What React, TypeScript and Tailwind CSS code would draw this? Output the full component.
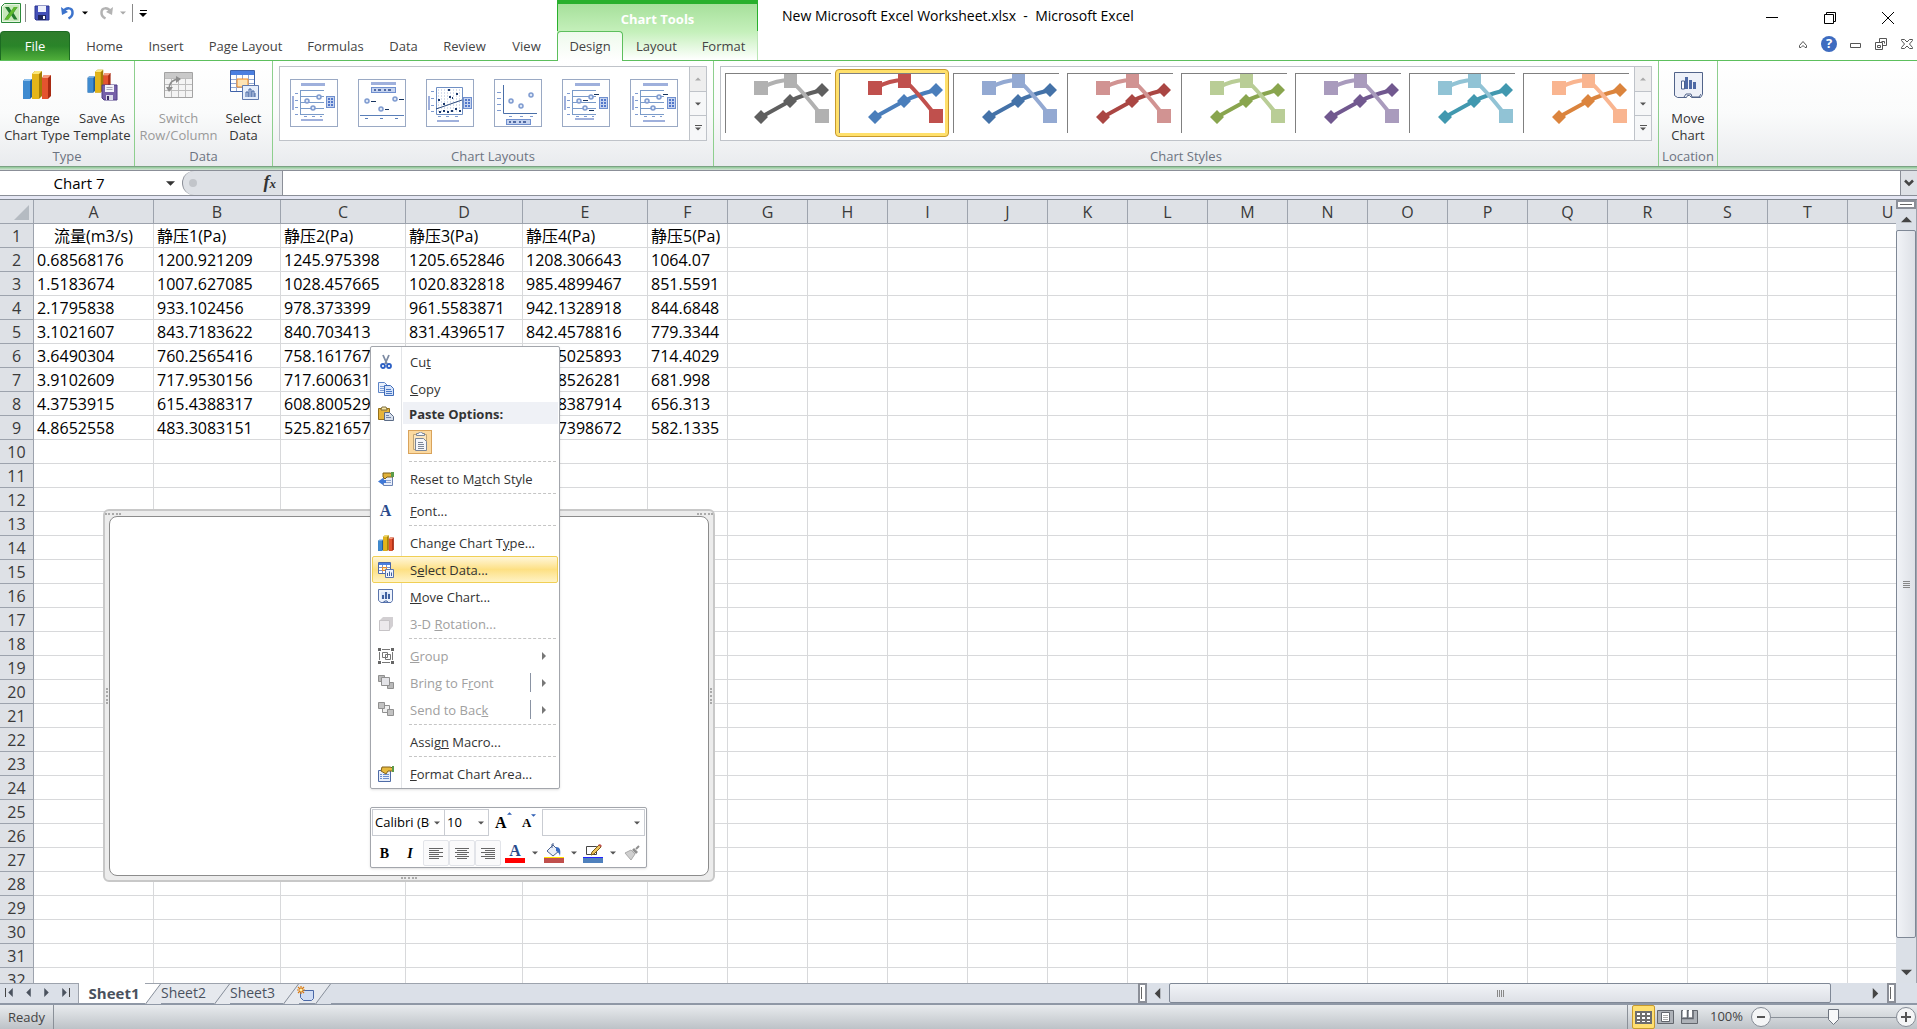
import type { ReactNode } from "react";

const columns = "ABCDEFGHIJKLMNOPQRSTU".split("");

const columnWidths: Record<string, string> = {
  A: "w-[120px]",
  B: "w-[127px]",
  C: "w-[125px]",
  D: "w-[117px]",
  E: "w-[125px]",
};

const data = [
  ["流量(m3/s)", "静压1(Pa)", "静压2(Pa)", "静压3(Pa)", "静压4(Pa)", "静压5(Pa)"],
  ["0.68568176", "1200.921209", "1245.975398", "1205.652846", "1208.306643", "1064.07"],
  ["1.5183674", "1007.627085", "1028.457665", "1020.832818", "985.4899467", "851.5591"],
  ["2.1795838", "933.102456", "978.373399", "961.5583871", "942.1328918", "844.6848"],
  ["3.1021607", "843.7183622", "840.703413", "831.4396517", "842.4578816", "779.3344"],
  ["3.6490304", "760.2565416", "758.161767", "", "755.5025893", "714.4029"],
  ["3.9102609", "717.9530156", "717.600631", "", "716.8526281", "681.998"],
  ["4.3753915", "615.4388317", "608.800529", "", "618.8387914", "656.313"],
  ["4.8652558", "483.3083151", "525.821657", "", "527.7398672", "582.1335"],
];

const tabs = [
  ["Home", "w-[63px]"],
  ["Insert", "w-[60px]"],
  ["Page Layout", "w-[99px]"],
  ["Formulas", "w-[81px]"],
  ["Data", "w-[55px]"],
  ["Review", "w-[67px]"],
  ["View", "w-[57px]"],
];

const chartStyles = [
  ["#5f5f5f", "#b1b1b1"],
  ["#4a7ebb", "#c0504d"],
  ["#4472a8", "#93a9d2"],
  ["#aa4643", "#d19392"],
  ["#89a54e", "#b9cd96"],
  ["#71588f", "#a99bbd"],
  ["#4198af", "#91c3d5"],
  ["#db843d", "#f9b590"],
];

/* ---------- icons ---------- */

function Arrow({ dir = "down", className = "" }: { dir?: "down" | "up" | "left" | "right"; className?: string }) {
  const d = {
    down: "M0 2h8L4 6z",
    up: "M0 6h8L4 2z",
    left: "M6 0v8L2 4z",
    right: "M2 0v8l4-4z",
  }[dir];
  return (
    <svg viewBox="0 0 8 8" className={`shrink-0 ${className}`} fill="currentColor" aria-hidden>
      <path d={d} />
    </svg>
  );
}

function Bars() {
  return (
    <>
      <path d="M2 12l2-2h7v18l-2 2H2z" fill="#1f5c99" />
      <path d="M2 12h7v18H2z" fill="#3f8bd0" />
      <path d="M2 12l2-2h7l-2 2z" fill="#8cc0ee" />
      <path d="M21 9l2-3h7v21l-3 3h-6z" fill="#a82a12" />
      <path d="M21 9h6v21h-6z" fill="#e4532f" />
      <path d="M21 9l2-3h7l-3 3z" fill="#f59a7c" />
      <path d="M11 5l3-3h7v25l-3 3h-7z" fill="#a37c05" />
      <path d="M11 5h7v25h-7z" fill="#e3b51a" />
      <path d="M11 5l3-3h7l-3 3z" fill="#fbe77a" />
    </>
  );
}

function ChartTypeIcon({ className = "size-8" }: { className?: string }) {
  return (
    <svg viewBox="0 0 32 32" className={className} aria-hidden>
      <Bars />
    </svg>
  );
}

function SaveTemplateIcon() {
  return (
    <svg viewBox="0 0 32 32" className="size-8" aria-hidden>
      <g transform="translate(0 -1) scale(.82)">
        <Bars />
      </g>
      <path d="M16 16h15v15H18l-2-2z" fill="#7560a8" stroke="#4f3c86" />
      <path d="M19 16h9v7h-9z" fill="#f3f3fa" />
      <path d="M20.500 18.500h6M20.500 20.500h6" stroke="#a9a9bb" />
      <path d="M20 26h7v5h-7z" fill="#dcdcea" />
      <path d="M21 27h2v4h-2z" fill="#3a2c66" />
    </svg>
  );
}

function SwitchIcon() {
  return (
    <svg viewBox="0 0 32 32" className="size-8" fill="none" aria-hidden>
      <path d="M1.500 3.500h28v25h-28z" fill="#f4f4f4" stroke="#a3a3a3" />
      <path d="M2 4h27v5H2z" fill="#c9c9c9" />
      <path d="M2 9.500h27M2 15.500h27M2 21.500h27M8.500 9v19M15.500 9v19M22.500 9v19" stroke="#bdbdbd" />
      <path d="M6 21c0-7 4-11 11-11" stroke="#8d8d8d" strokeWidth="1.500" />
      <path d="M13 7l5 3-5 4zM3 18l3 5 4-5z" fill="#8d8d8d" />
    </svg>
  );
}

function SelectDataIcon({ className = "size-8" }: { className?: string }) {
  return (
    <svg viewBox="0 0 32 32" className={className} fill="none" aria-hidden>
      <path d="M2.500 1.500h24v21h-24z" fill="#fff" stroke="#3f62a8" />
      <path d="M3 2h23v4H3z" fill="#4b7fe0" />
      <path d="M3 10.500h23M3 14.500h23M3 18.500h23M8.500 6v16M14.500 6v16M20.500 6v16" stroke="#93a8d2" />
      <path d="M9 10h11v8H9z" fill="#fde3b4" stroke="#f08a24" />
      <path d="M14.500 16.500h16v14h-16z" fill="#e6eefb" stroke="#5f79ad" />
      <path d="M18 28v-5h2v5M21 28v-8h2v8M24 28v-6h2v6M27 28v-4" stroke="#3f60a0" />
    </svg>
  );
}

function MoveChartIcon({ className = "size-8" }: { className?: string }) {
  return (
    <svg viewBox="0 0 32 32" className={className} fill="none" aria-hidden>
      <path d="M2.500 3.500h28v22l-2 3h-9l-2-2h-2l-1 2h-9l-3-2z" fill="#eef1f8" stroke="#52648a" />
      <path d="M12 28l2-3h5l1 3h7l2-3" stroke="#52648a" />
      <path d="M9.500 20v-8h3v8z" fill="#fff" stroke="#4b628f" />
      <path d="M13 8h3v12h-3zM17 11h3v9h-3zM21 13h3v7h-3z" fill="#4f6aa5" />
    </svg>
  );
}

const mark = "#7f9bd0";

function Legend({ x, y, wide }: { x: number; y: number; wide?: boolean }) {
  return wide ? (
    <g>
      <rect x={x + 0.5} y={y + 0.5} width="24" height="5" fill="#c5d3ef" stroke="#6f8fcf" />
      <path d={`M${x + 3} ${y + 3}h2m2 0h3m3 0h2m2 0h3`} stroke="#2c4a8c" strokeWidth="1.500" />
    </g>
  ) : (
    <g>
      <rect x={x + 0.5} y={y + 0.5} width="8" height="11" fill="#c5d3ef" stroke="#6f8fcf" />
      <path d={`M${x + 2} ${y + 3}h2m1 0h2M${x + 2} ${y + 6}h2m1 0h2M${x + 2} ${y + 9}h2m1 0h2`} stroke="#2c5ac0" strokeWidth="1.500" />
    </g>
  );
}

function Dots({ at }: { at: number[][] }) {
  return (
    <>
      {at.map(([x, y]) => (
        <circle key={x} cx={x} cy={y} r="2" fill="#dde6f6" stroke={mark} strokeWidth="1.500" />
      ))}
    </>
  );
}

function Lines() {
  return (
    <>
      <path d="M10.500 11v25M10 11.500h24M10 17.500h24M10 23.500h24M10 29.500h24M10 35.500h24" stroke="#7a9bc9" />
      <path d="M5 14.500h3M5 21.500h3M5 28.500h3M5 35.500h3M14 37.500h3M22 37.500h3M30 37.500h2" stroke={mark} />
      <path d="M2 17h2v14H2z" fill="#9fb0dc" />
    </>
  );
}

const layoutArt: ReactNode[] = [
  <>
    <path d="M11 4h24v3H11zM11 40h22v2H11z" fill="#9fb0dc" />
    <Lines />
    <Dots at={[[17, 22], [29, 18], [23, 29]]} />
    <Legend x={36} y={17} />
  </>,
  <>
    <path d="M13 3h25v3H13z" fill="#9fb0dc" />
    <Legend x={13} y={8} wide />
    <Dots at={[[9, 22], [37, 20], [23, 30]]} />
    <path d="M13 22.500h5M41 20.500h5M27 30.500h4" stroke="#16345f" />
    <path d="M2 36.500h44M7 39.500h3M22 39.500h3M37 39.500h3" stroke="#5b7fb8" />
  </>,
  <>
    <path d="M10.500 8.500h26v27h-26z" stroke="#6f8fc4" />
    <path d="M12 11h24M12 14h24M12 17h24M12 20h24M12 23h24M12 26h24M12 29h24M12 32h24" stroke="#a9b8d8" strokeDasharray="1 2" />
    <path d="M10 30l26-9" stroke="#2c4a7c" />
    <path d="M22 10h2v2h-2zM30 14h2v2h-2zM12 20h2v2h-2zM23 17h2v2h-2zM17 24h2v2h-2zM13 32h2v2h-2zM17 31h2v2h-2zM21 32h2v2h-2zM25 31h2v2h-2zM29 29h2v2h-2zM33 31h2v2h-2zM26 18h1v2h-1z" fill="#1d3a6e" />
    <path d="M5 12.500h3M5 19.500h3M5 26.500h3M5 32.500h3M12 37.500h3M20 37.500h3M29 37.500h3" stroke={mark} />
    <path d="M2 17h2v14H2zM11 41h22v2H11z" fill="#9fb0dc" />
    <Legend x={37} y={18} />
  </>,
  <>
    <path d="M9.500 6v28.500H43" stroke="#4a6fa8" />
    <path d="M3 13.500h4M3 19.500h4M3 25.500h4M3 31.500h4M15 37.500h3M26 37.500h3M36 37.500h3" stroke={mark} />
    <Dots at={[[17, 22], [27, 27], [37, 16]]} />
    <Legend x={12} y={40} wide />
  </>,
  <>
    <path d="M13 4h25v3H13zM13 39h19v2H13z" fill="#9fb0dc" />
    <Lines />
    <Dots at={[[17, 22], [29, 18], [23, 29]]} />
    <path d="M21 21.500h5M32 15.500h5M27 31.500h5" stroke="#16345f" />
    <Legend x={37} y={18} />
  </>,
  <>
    <path d="M13 4h25v3H13zM13 41h22v2H13z" fill="#9fb0dc" />
    <Lines />
    <Dots at={[[17, 22], [29, 18], [23, 29]]} />
    <path d="M33 15.500h5" stroke="#16345f" />
    <Legend x={37} y={18} />
  </>,
];

function StyleArt({ line, square }: { line: string; square: string }) {
  return (
    <svg viewBox="0 0 105 59" className="h-[59px] w-[105px]" fill="none" aria-hidden>
      <path d="M35 43L64 27Q76 21 96 16" stroke={line} strokeWidth="4" />
      <path d="M35 36l7 7-7 7-7-7zM64 20l7 7-7 7-7-7zM96 9l7 7-7 7-7-7z" fill={line} />
      <path d="M35 14Q50 6 64 6Q74 14 96 42" stroke={square} strokeWidth="4" />
      <path d="M28 7h14v14H28zM58 0h13v14H58zM89 35h14v14H89z" fill={square} />
    </svg>
  );
}

/* ---------- ribbon ---------- */

function RibbonGroup({ label, className = "", children }: { label: string; className?: string; children: ReactNode }) {
  return (
    <section
      className={`flex shrink-0 flex-col border-r border-[#8ecf8e] bg-linear-to-b from-white via-[#fafbfb] to-[#e9ebee] ${className}`}
      aria-label={label}
    >
      <div className="flex h-[86px] items-start justify-center">{children}</div>
      <div className="text-center leading-[19px] text-[#6c7380]">{label}</div>
    </section>
  );
}

function BigButton({ icon, lines, disabled, className = "" }: { icon: ReactNode; lines: string[]; disabled?: boolean; className?: string }) {
  return (
    <button disabled={disabled} className={`flex flex-col items-center pt-2 whitespace-nowrap ${disabled ? "text-[#9a9a9a]" : "text-[#333]"} ${className}`}>
      {icon}
      <span className="mt-[9px] leading-[17px]">
        {lines[0]}
        <br />
        {lines[1]}
      </span>
    </button>
  );
}

function GalleryScroll() {
  return (
    <div className="-my-px -mr-px flex w-[18px] flex-col border border-[#bfc3c9] text-[#555]">
      <button aria-label="Previous row" className="flex flex-1 items-center justify-center bg-[#eee] text-[#aaa]">
        <Arrow dir="up" className="size-[6px]" />
      </button>
      <button aria-label="Next row" className="flex flex-1 items-center justify-center border-y border-[#bfc3c9] bg-[#f6f7f8]">
        <Arrow className="size-[6px]" />
      </button>
      <button aria-label="More" className="flex flex-1 flex-col items-center justify-center bg-[#f6f7f8]">
        <span className="h-px w-[7px] bg-[#555]" />
        <Arrow className="size-[6px]" />
      </button>
    </div>
  );
}

function TitleArea() {
  return (
    <header className="flex h-[60px] bg-white">
      <div className="flex w-[557px] shrink-0 flex-col">
        <div className="flex h-[31px] items-center pb-[5px] pl-px">
          <button aria-label="Excel">
            <svg viewBox="0 0 20 20" className="size-5" aria-hidden>
              <path d="M.500 3.500l3-3h16v19h-19z" fill="#e8f5e2" stroke="#2c8a3a" />
              <path d="M2 4l3-2h13v16H2z" fill="#c7e8bb" />
              <path d="M4 4h4l2.500 4L13 4h3.500l-4 6 4 6.500H13L10 12l-3 4.500H3.500L8 10z" fill="#237a2f" />
              <path d="M13 4h3.500l-9 12.500h-4z" fill="#5fb92e" />
            </svg>
          </button>
          <span className="mx-1 h-[18px] w-px bg-[#888]" />
          <button aria-label="Save" className="ml-1">
            <svg viewBox="0 0 16 16" className="size-4" aria-hidden>
              <path d="M1 1h14v14H2l-1-1z" fill="#4450b8" stroke="#2b3490" />
              <path d="M4 1h8v6H4z" fill="#eef1fb" />
              <path d="M4 10h8v5H4z" fill="#20265e" />
              <path d="M9 11h2v3H9z" fill="#fff" />
            </svg>
          </button>
          <button aria-label="Undo" className="ml-2.5">
            <svg viewBox="0 0 16 16" className="size-4" fill="none" aria-hidden>
              <path d="M3 7c3-5 10-5 9.500 1 0 3-2 4.500-4 5.500" stroke="#3c73cc" strokeWidth="2.500" />
              <path d="M1 2l1 8 6-3z" fill="#3c73cc" />
            </svg>
          </button>
          <button aria-label="Undo list" className="ml-1.5">
            <Arrow className="size-[6px] text-black" />
          </button>
          <button aria-label="Redo" className="ml-2.5" disabled>
            <svg viewBox="0 0 16 16" className="size-4" fill="none" aria-hidden>
              <path d="M13 7c-3-5-10-5-9.500 1 0 3 2 4.500 4 5.500" stroke="#b3b3b3" strokeWidth="2.500" />
              <path d="M15 2l-1 8-6-3z" fill="#b3b3b3" />
            </svg>
          </button>
          <button aria-label="Redo list" className="ml-1.5" disabled>
            <Arrow className="size-[6px] text-[#aaa]" />
          </button>
          <span className="ml-1.5 h-[18px] w-px bg-[#888]" />
          <button aria-label="Customize" className="ml-1.5 flex flex-col items-center pt-0.5">
            <span className="h-px w-[7px] bg-black" />
            <Arrow className="size-2 text-black" />
          </button>
        </div>
        <nav className="flex h-[29px] text-[#444]">
          <button className="mr-[3px] w-[70px] rounded-t-sm border border-b-0 border-[#1c6b22] bg-linear-to-b from-[#2f7d2c] via-[#2a8429] to-[#4fae3a] pt-px text-white">File</button>
          {tabs.map(([label, width]) => (
            <button key={label} className={`${width} shrink-0 pt-0.5 whitespace-nowrap`}>
              {label}
            </button>
          ))}
        </nav>
      </div>
      <div className="flex w-[201px] shrink-0 flex-col border-t-4 border-[#28b02c] bg-linear-to-b from-[#a6e09b] via-[#c5f0bb] to-white">
        <div className="flex h-[27px] items-center justify-center border-x border-[#28b02c] pt-1 font-bold text-white">Chart Tools</div>
        <nav className="flex h-[29px] border-r border-[#b9e6b4] text-[#444]">
          <button className="relative -mb-px h-[30px] w-[66px] rounded-t-sm border border-b-0 border-[#5dbf5d] bg-linear-to-b from-[#eefaec] to-white">Design</button>
          <button className="w-[67px] pt-0.5">Layout</button>
          <button className="w-[67px] pt-0.5">Format</button>
        </nav>
      </div>
      <div className="flex flex-1 justify-between">
        <h1 className="pt-1 pl-6 text-[14px] leading-6 whitespace-pre text-black">New Microsoft Excel Worksheet.xlsx  -  Microsoft Excel</h1>
        <div className="flex flex-col text-black">
          <div className="flex h-[36px] items-center">
            <button aria-label="Minimize" className="flex w-[58px] justify-center">
              <svg viewBox="0 0 12 12" className="size-3" stroke="currentColor" aria-hidden>
                <path d="M0 5.500h12" />
              </svg>
            </button>
            <button aria-label="Restore" className="flex w-[58px] justify-center">
              <svg viewBox="0 0 12 12" className="size-3" fill="none" stroke="currentColor" aria-hidden>
                <path d="M.500 2.500h9v9h-9zM2.500 2.500v-2h9v9h-2" />
              </svg>
            </button>
            <button aria-label="Close" className="flex w-[58px] justify-center">
              <svg viewBox="0 0 12 12" className="size-3" stroke="currentColor" aria-hidden>
                <path d="M0 0l12 12M12 0L0 12" />
              </svg>
            </button>
          </div>
          <div className="flex items-center justify-end gap-[14px] pr-1 text-[#555]">
            <button aria-label="Minimize the ribbon" className="-mr-0.5">
              <svg viewBox="0 0 12 12" className="size-3" fill="none" stroke="currentColor" aria-hidden>
                <path d="M2.500 7.500L6 3.500l3.500 4v2H8L6 7.500l-2 2H2.500z" />
              </svg>
            </button>
            <button aria-label="Help" className="-mr-0.5 flex size-4 items-center justify-center rounded-full bg-[#3e6cc0] text-[13px] font-bold text-white">?</button>
            <button aria-label="Minimize workbook">
              <svg viewBox="0 0 12 12" className="size-3" fill="none" stroke="currentColor" aria-hidden>
                <path d="M1.500 5.500h10v4h-10z" />
              </svg>
            </button>
            <button aria-label="Restore workbook">
              <svg viewBox="0 0 12 12" className="size-3" fill="none" stroke="currentColor" aria-hidden>
                <path d="M.500 4.500h7v7h-7zM2.500 7.500h3v2h-3zM4.500 4v-3.500h7v7h-3.500M6.500 3.500h3v2" />
              </svg>
            </button>
            <button aria-label="Close workbook">
              <svg viewBox="0 0 12 12" className="size-3" fill="none" stroke="currentColor" aria-hidden>
                <path d="M.500 1.500h3l2.500 2.500 2.500-2.500h3v1l-3 3.500 3 3.500v1h-3L6 8l-2.500 2.500h-3v-1l3-3.500-3-3.500z" />
              </svg>
            </button>
          </div>
        </div>
      </div>
    </header>
  );
}

function Ribbon() {
  return (
    <div className="flex h-[106px] overflow-hidden border-t border-[#5dbf5d] bg-linear-to-b from-white via-[#fafbfb] to-[#e9ebee]">
      <RibbonGroup label="Type" className="w-[135px]">
        <BigButton icon={<ChartTypeIcon />} lines={["Change", "Chart Type"]} className="w-[70px]" />
        <BigButton icon={<SaveTemplateIcon />} lines={["Save As", "Template"]} className="w-[60px]" />
      </RibbonGroup>
      <RibbonGroup label="Data" className="w-[138px]">
        <BigButton icon={<SwitchIcon />} lines={["Switch", "Row/Column"]} disabled className="w-[80px]" />
        <BigButton icon={<SelectDataIcon />} lines={["Select", "Data"]} className="w-[50px]" />
      </RibbonGroup>
      <RibbonGroup label="Chart Layouts" className="w-[441px]">
        <div className="mt-[5px] flex h-[75px] border border-[#bfc3c9] bg-white">
          <div className="flex items-start gap-5 pt-3 pr-[11px] pl-[10px]">
            {layoutArt.map((art, i) => (
              <button key={i} aria-label={`Layout ${i + 1}`} className="size-12 border border-[#9aa9c4]">
                <svg viewBox="1 1 46 46" className="size-full" fill="none" aria-hidden>
                  {art}
                </svg>
              </button>
            ))}
          </div>
          <GalleryScroll />
        </div>
      </RibbonGroup>
      <RibbonGroup label="Chart Styles" className="w-[945px]">
        <div className="mt-[5px] flex h-[75px] border border-[#bfc3c9] bg-white">
          <div className="flex items-start pt-0.5 pr-px">
            {chartStyles.map(([line, square], i) => (
              <button
                key={line}
                aria-label={`Style ${i + 1}`}
                className={i === 1 ? "rounded-sm border border-[#c79a2e] bg-[#ffe06b] p-[3px]" : "p-1"}
              >
                <span className="block h-[60px] w-[106px] border-t border-l border-[#808080] bg-white">
                  <StyleArt line={line} square={square} />
                </span>
              </button>
            ))}
          </div>
          <GalleryScroll />
        </div>
      </RibbonGroup>
      <RibbonGroup label="Location" className="w-[59px]">
        <BigButton icon={<MoveChartIcon />} lines={["Move", "Chart"]} />
      </RibbonGroup>
    </div>
  );
}

function FormulaBar() {
  return (
    <div>
      <div className="h-1 border-t border-[#7ba284] bg-linear-to-b from-[#8cc794] to-[#d5e3d9]" />
      <div className="flex h-[26px] border-y border-[#8b8f98] bg-white">
        <input aria-label="Name box" defaultValue="Chart 7" className="w-[160px] bg-white pr-0.5 text-center text-[15px] text-black" />
        <button aria-label="Name list" className="flex w-[22px] items-center justify-center pr-0.5">
          <Arrow className="size-[9px] text-[#333]" />
        </button>
        <div className="flex w-[101px] items-center justify-between rounded-l-full border-r border-l border-[#8b8f98] bg-[#dee1e6] px-[6px]">
          <span className="size-2 rounded-full bg-[#c2c5ca]" />
          <button aria-label="Insert function" className="font-['Liberation_Serif',serif] text-[18px] leading-5 font-bold text-[#333] italic">
            f<span className="text-[13px]">x</span>
          </button>
        </div>
        <input aria-label="Formula bar" className="min-w-0 flex-1 bg-white px-1" />
        <button aria-label="Expand formula bar" className="flex w-[17px] items-center justify-center border-l border-[#8b8f98] bg-[#dee1e6]">
          <svg viewBox="0 0 10 8" className="h-2 w-[10px]" fill="none" stroke="#444" strokeWidth="2.500" aria-hidden>
            <path d="M1 1.500l4 4 4-4" />
          </svg>
        </button>
      </div>
      <div className="h-[3px] bg-[#e4e6f3]" />
    </div>
  );
}

/* ---------- sheet ---------- */

function Grid() {
  return (
    <table className="w-[1894px] table-fixed border-separate border-spacing-0 text-[16px] leading-[21px] text-black">
      <thead>
        <tr className="h-6 bg-[#dee1e6] text-[#3a3a3a]">
          <th className="w-[34px] border-r border-b border-[#9da3ad] p-0" aria-label="Select all">
            <svg viewBox="0 0 33 23" className="block h-[23px] w-[33px]" aria-hidden>
              <path d="M29 5v15H14z" fill="#b5bbc2" />
            </svg>
          </th>
          {columns.map((c) => (
            <th key={c} scope="col" className={`${columnWidths[c] ?? "w-20"} border-r border-b border-[#9da3ad] p-0 pt-0.5 font-normal`}>
              {c}
            </th>
          ))}
        </tr>
      </thead>
      <tbody>
        {Array.from({ length: 32 }, (_, r) => (
          <tr key={r} className="h-6">
            <th scope="row" className="border-r border-b border-[#9da3ad] bg-[#dee1e6] p-0 pt-0.5 font-normal text-[#3a3a3a]">
              {r + 1}
            </th>
            {columns.map((c, i) => (
              <td key={c} className={`h-6 border-r border-b border-[#d8d9db] px-[3px] pt-0.5 pb-0 whitespace-nowrap ${r === 0 && i === 0 ? "text-center" : ""}`}>
                {data[r]?.[i]}
              </td>
            ))}
          </tr>
        ))}
      </tbody>
    </table>
  );
}

function Grip({ vertical }: { vertical?: boolean }) {
  return <span className={vertical ? "h-4 border-l-2 border-dotted border-[#aaa]" : "w-4 border-t-2 border-dotted border-[#aaa]"} />;
}

function ChartFrame() {
  return (
    <div className="absolute top-[309px] left-[103px] flex h-[373px] w-[612px] flex-col rounded-md border-2 border-[#c8c8c8] bg-[#ececec]">
      <div className="flex h-[5px] items-center justify-between">
        <Grip />
        <Grip />
      </div>
      <div className="flex flex-1">
        <div className="flex w-1 items-center justify-center">
          <Grip vertical />
        </div>
        <div className="flex-1 rounded-lg border border-[#8c8c8c] bg-white" />
        <div className="flex w-1 items-center justify-center">
          <Grip vertical />
        </div>
      </div>
      <div className="flex h-1 items-center justify-center">
        <Grip />
      </div>
    </div>
  );
}

const icons = {
  cut: (
    <svg viewBox="0 0 16 16" className="size-4" fill="none" aria-hidden>
      <path d="M5 1l4 9M11 1L7 10" stroke="#7d8ba3" strokeWidth="1.800" />
      <circle cx="5" cy="12" r="2" stroke="#2c5fc4" strokeWidth="1.800" />
      <circle cx="11" cy="12" r="2" stroke="#2c5fc4" strokeWidth="1.800" />
    </svg>
  ),
  copy: (
    <svg viewBox="0 0 16 16" className="size-4" aria-hidden>
      <path d="M.500 1.500h6l3 3v7h-9z" fill="#eaf1fc" stroke="#5c84c8" />
      <path d="M2 5.500h4M2 7.500h4M2 9.500h4" stroke="#7d9ed6" />
      <path d="M6.500 4.500h6l3 3v7h-9z" fill="#d5e3fa" stroke="#3f6bb8" />
      <path d="M8 8.500h5M8 10.500h6M8 12.500h6" stroke="#4a78c4" />
    </svg>
  ),
  paste: (
    <svg viewBox="0 0 16 16" className="size-4" aria-hidden>
      <path d="M.500 2.500h11v11H.500z" fill="#e5b33a" stroke="#94701c" />
      <path d="M3 3l1-2h4l1 2v1H3z" fill="#f7e6a7" stroke="#7a6a3a" />
      <path d="M6.500 6.500h5l4 4v4h-9z" fill="#d7dfec" stroke="#5b6b86" />
      <path d="M8 9.500h3M8 11.500h5" stroke="#6f82a6" />
    </svg>
  ),
  reset: (
    <svg viewBox="0 0 16 16" className="size-4" aria-hidden>
      <path d="M5.500 5.500h9v9h-9z" fill="#e8eefa" stroke="#6b83b3" />
      <path d="M8 9.500h5M8 11.500h5" stroke="#8fa3cc" />
      <path d="M5 2h7l3 1v3H9L7 8 5 6z" fill="#e0b13a" stroke="#7d5e16" />
      <path d="M13 1h3v5h-3z" fill="#5b9b4a" />
      <path d="M5 7v2h3v3H5v2L0 10.500z" fill="#3f78d8" />
    </svg>
  ),
  font: <span className="font-['Liberation_Serif',serif] text-[16px] font-bold text-[#2a4a8c]">A</span>,
  chart: <ChartTypeIcon className="size-[18px]" />,
  select: (
    <svg viewBox="0 0 16 16" className="size-4" fill="none" aria-hidden>
      <path d="M.500.500h12v11H.500z" fill="#fff" stroke="#4a66a8" />
      <path d="M1 1h11v2H1z" fill="#4b7fe0" />
      <path d="M1 5.500h11M1 8.500h11M4.500 3v8M8.500 3v8" stroke="#7f93c2" />
      <path d="M4.500 5.500h4v3h-4z" fill="#ffe3a8" stroke="#f08a24" />
      <path d="M7.500 7.500h8v8h-8z" fill="#eef3fc" stroke="#5a74ac" />
      <path d="M9.500 14v-3M11.500 14V9.500M13.500 14v-3.500" stroke="#3f60a0" />
    </svg>
  ),
  move: (
    <svg viewBox="0 0 16 16" className="size-4" fill="none" aria-hidden>
      <path d="M.500.500h14v11l-1.500 2H3l-2.500-2z" fill="#eef3fc" stroke="#5a74ac" />
      <path d="M3 3h9v7H3z" fill="#dbe6f8" />
      <path d="M4 10V6h2v4zM7 10V3h2v7zM10 10V5h2v5z" fill="#3f60a0" />
      <path d="M5 13.500l2-1.500h2l1 1.500" stroke="#3f60a0" />
    </svg>
  ),
  cube: (
    <svg viewBox="0 0 16 16" className="size-4" aria-hidden>
      <path d="M1 5l4-4h10v9l-4 5H1z" fill="#d2cfd2" />
      <path d="M1.500 4.500h10v10h-10z" fill="#ece9ec" stroke="#c6c3c6" />
    </svg>
  ),
  group: (
    <svg viewBox="0 0 16 16" className="size-4" fill="none" stroke="#777" aria-hidden>
      <path d="M4 1.500h8M4 14.500h8M1.500 4v8M14.500 4v8" />
      <path d="M4.500 4.500h5v5h-5zM7.500 6.500h5v5h-5z" />
      <path d="M0 0h3v3H0zM13 0h3v3h-3zM0 13h3v3H0zM13 13h3v3h-3z" fill="#666" stroke="none" />
    </svg>
  ),
  front: (
    <svg viewBox="0 0 16 16" className="size-4" stroke="#909090" aria-hidden>
      <path d="M.500.500h6v6h-6zM9.500 7.500h6v6h-6z" fill="#b9b9b9" />
      <path d="M3.500 2.500h8v8h-8z" fill="#e4e4e8" />
    </svg>
  ),
  back: (
    <svg viewBox="0 0 16 16" className="size-4" stroke="#909090" aria-hidden>
      <path d="M4.500 3.500h7v7h-7z" fill="#efefef" />
      <path d="M.500.500h6v6h-6zM9.500 7.500h6v6h-6z" fill="#c2c2c2" />
    </svg>
  ),
  format: (
    <svg viewBox="0 0 16 16" className="size-4" aria-hidden>
      <path d="M.500 4.500h12v11H.500z" fill="#e8eefa" stroke="#4e6ba6" />
      <path d="M2 8.500h2M5 8.500h6M2 10.500h2M5 10.500h6M2 12.500h2M5 12.500h6" stroke="#6b8fd0" />
      <path d="M4 1h8l3 1v3h-5L8 8 3 5z" fill="#e6b93e" stroke="#80601a" />
      <path d="M14 0h2v6h-2z" fill="#5b9b4a" />
    </svg>
  ),
};

type Item = {
  before?: string;
  hot: string;
  after?: string;
  icon?: keyof typeof icons;
  disabled?: boolean;
  active?: boolean;
  submenu?: boolean;
  split?: boolean;
};

function MenuItem({ before, hot, after, icon, disabled, active, submenu, split }: Item) {
  return (
    <button
      role="menuitem"
      disabled={disabled}
      className={`flex h-[27px] w-full items-center border text-left ${disabled ? "text-[#a0a0a0]" : "text-[#333]"} ${
        active ? "rounded-xs border-[#f0cf55] bg-linear-to-b from-[#fff6d8] via-[#fde083] to-[#fff3c4]" : "border-transparent"
      }`}
    >
      <span className="flex w-[25px] shrink-0 justify-center">{icon && icons[icon]}</span>
      <span className="ml-3 flex-1 pt-0.5 whitespace-nowrap">
        {before}
        <u>{hot}</u>
        {after}
      </span>
      {split && <span className="mr-[9px] h-[19px] w-px bg-[#8a93a3]" />}
      {submenu && <Arrow dir="right" className="mr-[9px] size-2 text-[#777]" />}
    </button>
  );
}

function Separator() {
  return <div className="mr-0.5 ml-[37px] h-[5px] pt-px" role="separator"><div className="border-t border-dashed border-[#c5c5c5]" /></div>;
}

function ContextMenu() {
  return (
    <div
      role="menu"
      className="absolute top-[146px] left-[370px] w-[190px] rounded-xs border border-[#a3a6ac] bg-[linear-gradient(to_right,#fff_30px,#e2e4e7_30px,#e2e4e7_31px,#fff_31px)] p-px shadow-sm"
    >
      <MenuItem icon="cut" before="Cu" hot="t" />
      <MenuItem icon="copy" hot="C" after="opy" />
      <div className="flex h-[22px] items-center">
        <span className="flex w-[27px] justify-center pt-0.5">{icons.paste}</span>
        <span className="ml-1 flex-1 self-stretch bg-[#eff1f6] pl-[6px] leading-6 font-bold text-[#333]">Paste Options:</span>
      </div>
      <div className="h-9 pt-[6px] pl-[36px]">
        <button aria-label="Paste" className="flex size-6 items-center justify-center border border-[#d9a35b] bg-[#fbd9a0]">
          <svg viewBox="0 0 20 20" className="size-5" fill="#f5f6fa" stroke="#7b8698" aria-hidden>
            <path d="M3.500 2.500h13v15h-13z" fill="#fce6c0" stroke="#bfa477" />
            <path d="M6.500 3.500v-2h2l1-1.500h2l1 1.500h2v2z" />
            <path d="M5.500 6.500h8l3 3v9h-11z" />
            <path d="M8 10.500h5M8 12.500h6M8 14.500h6M8 16.500h6" />
          </svg>
        </button>
      </div>
      <Separator />
      <MenuItem icon="reset" before="Reset to M" hot="a" after="tch Style" />
      <Separator />
      <MenuItem icon="font" hot="F" after="ont..." />
      <Separator />
      <MenuItem icon="chart" before="Change Chart T" hot="y" after="pe..." />
      <MenuItem icon="select" before="S" hot="e" after="lect Data..." active />
      <MenuItem icon="move" hot="M" after="ove Chart..." />
      <MenuItem icon="cube" before="3-D " hot="R" after="otation..." disabled />
      <Separator />
      <MenuItem icon="group" hot="G" after="roup" disabled submenu />
      <MenuItem icon="front" before="Bring to F" hot="r" after="ont" disabled submenu split />
      <MenuItem icon="back" before="Send to Bac" hot="k" disabled submenu split />
      <Separator />
      <MenuItem before="Assig" hot="n" after=" Macro..." />
      <Separator />
      <MenuItem icon="format" hot="F" after="ormat Chart Area..." />
    </div>
  );
}

function Combo({ label, value, className }: { label: string; value: string; className: string }) {
  return (
    <div className={`flex h-[27px] items-center border border-[#c9ccd2] bg-white ${className}`}>
      <select aria-label={label} className="h-full min-w-0 flex-1 appearance-none overflow-hidden bg-white pl-0.5 text-black text-clip">
        <option>{value}</option>
      </select>
      <Arrow className="mx-1 size-[6px] text-[#555]" />
    </div>
  );
}

function ColorButton({ label, bar, children }: { label: string; bar: string; children: ReactNode }) {
  return (
    <div className="flex w-[39px] items-center justify-between pr-[6px]">
      <button aria-label={label} className="flex flex-col items-center">
        <span className="flex h-[14px] items-end justify-center">{children}</span>
        <span className={`w-5 ${bar}`} />
      </button>
      <Arrow className="size-[6px] text-[#555]" />
    </div>
  );
}

function MiniToolbar() {
  return (
    <div className="absolute top-[607px] left-[370px] flex w-[277px] flex-col gap-1 rounded-xs border border-[#a3a6ac] bg-white p-px shadow-sm">
      <div className="flex items-center">
        <Combo label="Font" value="Calibri (Body)" className="w-[73px]" />
        <Combo label="Font size" value="10" className="w-[44px] border-l-0" />
        <button aria-label="Grow font" className="ml-[6px] flex w-[20px] font-['Liberation_Serif',serif] text-[16px] font-bold">
          A<Arrow dir="up" className="size-[5px] text-[#2f5fb5]" />
        </button>
        <button aria-label="Shrink font" className="ml-[7px] flex w-[20px] font-['Liberation_Serif',serif] text-[13px] font-bold">
          A<Arrow className="size-[5px] text-[#2f5fb5]" />
        </button>
        <Combo label="Chart element" value="" className="flex-1" />
      </div>
      <div className="flex h-[26px] items-center">
        <button aria-label="Bold" className="w-[25px] font-['Liberation_Serif',serif] text-[14px] font-bold">B</button>
        <button aria-label="Italic" className="w-[26px] font-['Liberation_Serif',serif] text-[14px] font-bold italic">I</button>
        {["M0 .500h14M0 2.500h10M0 4.500h14M0 6.500h10M0 8.500h14M0 10.500h10", "M0 .500h14M2 2.500h10M0 4.500h14M2 6.500h10M0 8.500h14M2 10.500h10", "M0 .500h14M4 2.500h10M0 4.500h14M4 6.500h10M0 8.500h14M4 10.500h10"].map((d, i) => (
          <button key={d} aria-label={["Align left", "Center", "Align right"][i]} className="flex h-[26px] w-[26px] items-center justify-center rounded-xs border border-[#e2e4e9] bg-[#fafafb]">
            <svg viewBox="0 0 14 11" className="h-[11px] w-[14px]" stroke="#666" aria-hidden>
              <path d={d} />
            </svg>
          </button>
        ))}
        <div className="ml-1 flex">
          <ColorButton label="Font color" bar="h-[5px] bg-[#ff0000]">
            <span className="font-['Liberation_Serif',serif] text-[16px] leading-[14px] font-bold text-[#2a4a8c]">A</span>
          </ColorButton>
          <ColorButton label="Fill color" bar="h-[6px] border-t border-[#ffe100] bg-[#c0504d]">
            <svg viewBox="0 0 16 14" className="h-[14px] w-4" aria-hidden>
              <path d="M1 8l6-6 6 6-6 5z" fill="#e9eef8" stroke="#4b628f" />
              <path d="M6 5V1h2" fill="none" stroke="#4b628f" />
              <path d="M10 4c4 0 5 3 4 9-1-3-2-4-4-5z" fill="#3a6bc0" />
            </svg>
          </ColorButton>
          <ColorButton label="Outline color" bar="h-[6px] border-t border-[#2222ff] bg-[#4f81bd]">
            <svg viewBox="0 0 17 14" className="h-[14px] w-[17px]" aria-hidden>
              <path d="M1.500 3.500h10v8h-10z" fill="#fff" stroke="#444" />
              <path d="M7 9l7-7 2 2-7 7-3 1z" fill="#edc35c" stroke="#7d5e16" />
              <path d="M13 2l2-1 2 2-1 1z" fill="#c0504d" />
            </svg>
          </ColorButton>
        </div>
        <button aria-label="Format painter" className="ml-0.5">
          <svg viewBox="0 0 16 16" className="size-4" aria-hidden>
            <path d="M1 8l6-3 4 4-4 6z" fill="#cfcfcf" stroke="#aaa" />
            <path d="M8 5l2-2 4 4-2 2z" fill="#8f8f8f" />
            <path d="M12 4l3-3" stroke="#8f8f8f" strokeWidth="2" />
          </svg>
        </button>
      </div>
    </div>
  );
}

function VerticalScroll() {
  return (
    <div className="flex w-[21px] shrink-0 flex-col items-center border-r border-[#9da3ad] bg-[#dbe0e7]">
      <div className="flex h-[9px] w-full items-center justify-center border-2 border-[#8b8f98] bg-white">
        <span className="h-px w-3 bg-[#666]" />
      </div>
      <button aria-label="Scroll up" className="flex h-[21px] items-center">
        <Arrow dir="up" className="size-[11px] text-[#444]" />
      </button>
      <div className="flex w-full flex-1 flex-col items-center justify-center gap-px rounded-xs border border-[#7f8896] bg-linear-to-r from-[#f1f3f7] to-[#dde0e6]">
        <span className="h-px w-[7px] bg-[#888]" />
        <span className="h-px w-[7px] bg-[#888]" />
        <span className="h-px w-[7px] bg-[#888]" />
        <span className="h-px w-[7px] bg-[#888]" />
      </div>
      <div className="h-[24px]" />
      <button aria-label="Scroll down" className="flex h-[21px] items-center">
        <Arrow className="size-[11px] text-[#444]" />
      </button>
    </div>
  );
}

function TabEdge({ left, right }: { left: string; right: string }) {
  return (
    <svg viewBox="0 0 16 20" className="h-5 w-4 shrink-0" aria-hidden>
      <path d="M0 0h16L1 20H0z" fill={left} />
      <path d="M16 0v20H1z" fill={right} />
      <path d="M15.500 0l-15 20" stroke="#858d99" />
    </svg>
  );
}

function SheetBar() {
  return (
    <div className="flex h-[22px] border-b-2 border-[#8f98a6] bg-[#dbe0e8] text-[#4a525e]">
      <div className="flex min-w-0 flex-1 border-t border-[#9da3ad]">
        <div className="flex w-[79px] items-center justify-around border-r border-[#9da3ad] pr-[3px] pb-0.5">
          <button aria-label="First sheet" className="flex items-center">
            <span className="h-[9px] w-px bg-[#444]" />
            <Arrow dir="left" className="size-[9px]" />
          </button>
          <button aria-label="Previous sheet">
            <Arrow dir="left" className="size-[9px]" />
          </button>
          <button aria-label="Next sheet">
            <Arrow dir="right" className="size-[9px]" />
          </button>
          <button aria-label="Last sheet" className="flex items-center">
            <Arrow dir="right" className="size-[9px]" />
            <span className="h-[9px] w-px bg-[#444]" />
          </button>
        </div>
        <button className="-mt-px w-[66px] bg-white pl-1 text-[15px] leading-5 font-bold">Sheet1</button>
        <TabEdge left="#fff" right="#e6e9ee" />
        <button className="w-[53px] bg-[#e6e9ee] pr-2 pb-0.5 text-[14px] leading-[18px]">Sheet2</button>
        <TabEdge left="#e6e9ee" right="#e6e9ee" />
        <button className="w-[53px] bg-[#e6e9ee] pr-2 pb-0.5 text-[14px] leading-[18px]">Sheet3</button>
        <TabEdge left="#e6e9ee" right="#e6e9ee" />
        <button aria-label="Insert worksheet" className="w-4 bg-[#e6e9ee]">
          <svg viewBox="2 0 16 16" className="size-4 overflow-visible" fill="none" aria-hidden>
            <path d="M3.500 4.500h13v8l-2 2h-8l-3-3z" fill="#cfdcf4" stroke="#4a68a6" />
            <path d="M4 0v8M0 4h8M1 1l6 6M7 1L1 7" stroke="#d9780f" strokeWidth="1.200" />
            <circle cx="4" cy="4" r="1.500" fill="#fff3b0" />
          </svg>
        </button>
        <TabEdge left="#e6e9ee" right="#dbe0e8" />
      </div>
      <div className="flex w-[779px] shrink-0">
        <span className="flex w-[9px] items-center border-2 border-[#8b8f98] bg-white">
          <span className="ml-px h-3 w-px bg-[#666]" />
        </span>
        <button aria-label="Scroll left" className="flex w-[22px] items-center justify-center pr-0.5">
          <Arrow dir="left" className="size-[11px] text-[#444]" />
        </button>
        <div className="flex flex-1 items-center justify-center gap-px rounded-xs border border-[#7f8896] bg-linear-to-b from-[#f1f3f7] to-[#dde0e6]">
          <span className="h-[7px] w-px bg-[#888]" />
          <span className="h-[7px] w-px bg-[#888]" />
          <span className="h-[7px] w-px bg-[#888]" />
          <span className="h-[7px] w-px bg-[#888]" />
        </div>
        <button aria-label="Scroll right" className="flex w-[56px] items-center justify-end pr-[6px]">
          <Arrow dir="right" className="size-[11px] text-[#444]" />
        </button>
        <span className="flex w-[9px] items-center border-2 border-[#8b8f98] bg-white">
          <span className="ml-px h-3 w-px bg-[#666]" />
        </span>
        <span className="w-[21px]" />
      </div>
    </div>
  );
}

function StatusBar() {
  return (
    <footer className="flex h-6 items-center justify-between bg-linear-to-b from-[#e8ebee] via-[#d3d7db] to-[#bdc2c7] text-[#444]">
      <span className="w-[54px] border-r border-[#8a9098] pl-2 leading-6">Ready</span>
      <div className="flex h-6 items-center border-l border-[#8a9098] pr-px pl-1">
        <button aria-label="Normal view" className="flex h-6 w-[23px] items-center justify-center rounded-xs border border-[#c79a2e] bg-[#ffdf70]">
          <svg viewBox="0 0 17 13" className="h-[13px] w-[17px]" aria-hidden>
            <path d="M0 0h17v13H0z" fill="#6d6d6d" />
            <path d="M2 2h3v2H2zM7 2h3v2H7zM12 2h3v2h-3zM2 6h3v2H2zM7 6h3v2H7zM12 6h3v2h-3zM2 10h3v1H2zM7 10h3v1H7zM12 10h3v1h-3z" fill="#fff" />
          </svg>
        </button>
        <button aria-label="Page layout view" className="ml-0.5">
          <svg viewBox="0 0 17 14" className="h-[14px] w-[17px]" fill="none" aria-hidden>
            <path d="M.500.500h16v13H.500z" fill="#aeb2b8" stroke="#62666d" />
            <path d="M4.500 2.500h8v9h-8z" fill="#fff" stroke="#62666d" />
            <path d="M6 5.500h5M6 7.500h5M6 9.500h5" stroke="#aaa" />
          </svg>
        </button>
        <button aria-label="Page break preview" className="ml-[7px]">
          <svg viewBox="0 0 17 14" className="h-[14px] w-[17px]" aria-hidden>
            <path d="M.500.500h16v13H.500z" fill="#aeb2b8" stroke="#62666d" />
            <path d="M2 0h4v7H2zM8 0h3v7H8z" fill="#fff" />
            <path d="M1 8.500h11V0M6.500 0v8" stroke="#62666d" fill="none" strokeWidth="1.500" />
          </svg>
        </button>
        <button className="w-[49px] pr-1 text-right">100%</button>
        <button aria-label="Zoom out" className="ml-1">
          <svg viewBox="0 0 20 20" className="size-5" aria-hidden>
            <circle cx="10" cy="10" r="9.500" fill="#f4f5f6" stroke="#858b95" />
            <path d="M6 10h8" stroke="#555" strokeWidth="2" />
          </svg>
        </button>
        <div className="relative flex h-5 w-[125px] items-center">
          <span className="h-px w-full bg-[#8a9098]" />
          <svg viewBox="0 0 11 16" className="pointer-events-none absolute left-[57px] h-4 w-[11px]" aria-hidden>
            <path d="M.500.500h10v10l-5 5-5-5z" fill="#f7f8f9" stroke="#6d747f" />
          </svg>
          <input type="range" aria-label="Zoom" min="0" max="200" defaultValue="100" className="absolute inset-0 w-full opacity-0" />
        </div>
        <button aria-label="Zoom in">
          <svg viewBox="0 0 20 20" className="size-5" aria-hidden>
            <circle cx="10" cy="10" r="9.500" fill="#f4f5f6" stroke="#858b95" />
            <path d="M5 10h10M10 5v10" stroke="#555" strokeWidth="2" />
          </svg>
        </button>
      </div>
    </footer>
  );
}

export default function App() {
  return (
    <div className="flex h-screen flex-col overflow-hidden bg-white font-['Open_Sans','Noto_Sans_CJK_SC',sans-serif] text-[13px]">
      <TitleArea />
      <Ribbon />
      <FormulaBar />
      <main className="flex min-h-0 flex-1 border-t border-[#7f8690]">
        <div className="relative min-w-0 flex-1 overflow-hidden">
          <Grid />
          <ChartFrame />
          <ContextMenu />
          <MiniToolbar />
        </div>
        <VerticalScroll />
      </main>
      <SheetBar />
      <StatusBar />
    </div>
  );
}
